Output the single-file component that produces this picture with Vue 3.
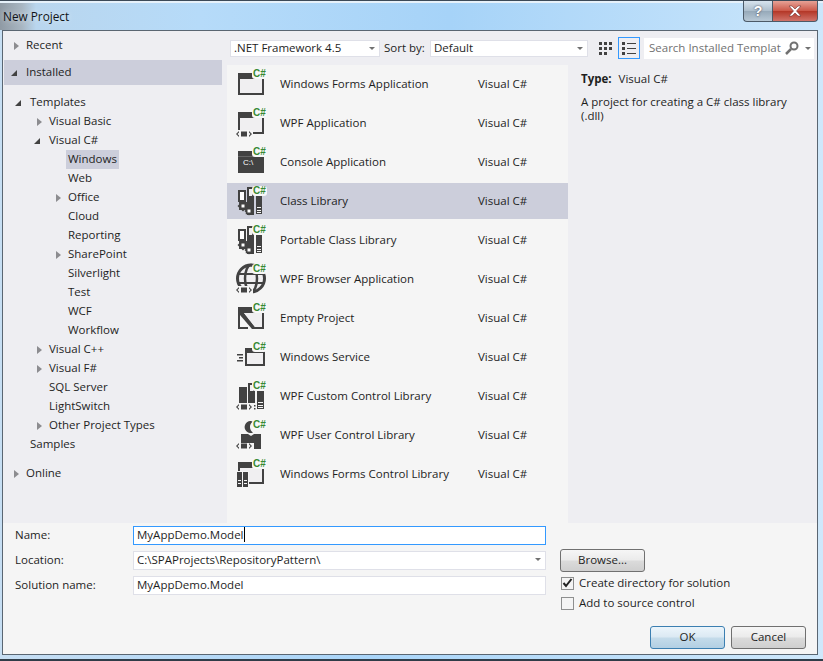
<script setup>
const DARK = '#424242'
const PANE = '#f0eff1'
const CUT = '#f5f5f5'

// the <■> mark that sits under the WPF icons
const wpfMark = { d: 'M4 26v1.500L2.500 29 4 30.500V32l-3-3zM6 26.500h6v5H6zM14 26v1.500l1.500 1.500-1.500 1.500V32l3-3z', fill: DARK }
const markGap = { d: 'M0 25h18v8H0z', fill: CUT }

// a small eight pointed cog with a hole in it
function cog(x, y, r) {
  const s = r * 0.72
  return [
    { d: `M${x - s} ${y - s}h${s * 2}v${s * 2}h${-s * 2}zM${x} ${y - r}l${r} ${r}l${-r} ${r}l${-r} ${-r}z`, fill: DARK },
    { d: `M${x - 1.5} ${y - 1.5}h3v3h-3z`, fill: '#fff' },
  ]
}

const library = [
  { d: 'M12 4h7v28h-7z', fill: DARK },
  { d: 'M14 6h3v7h-3z', fill: PANE },
  { d: 'M21 10h6v21h-6z', fill: DARK },
  { d: 'M22 24h4v1h-4zM22 27h4v1h-4zM22 29h4v1h-4z', fill: CUT },
  { d: 'M3 7h8v12H3z', fill: DARK },
  { d: 'M5 9h4v8H5z', fill: '#fff' },
  ...cog(8, 23, 5.5),
  ...cog(14, 28, 4.5),
]

// every icon is drawn on a 34x36 grid, the row's top left corner being 0,0
const icons = {
  forms: [{ d: 'M3 7h26v22H3z', fill: DARK }, { d: 'M5 13h22v14H5z', fill: PANE }],
  wpf: [
    { d: 'M3 7h26v22H18v-2h9V13H5v12H3z', fill: DARK },
    { d: 'M5 13h22v14H18v-2H5z', fill: PANE },
    wpfMark,
  ],
  console: [
    { d: 'M3 7h26v22H3z', fill: DARK },
    { d: 'M3 12h26v1H3z', fill: '#666' },
  ],
  library,
  browser: [
    { d: 'M2.500 17.500a13.500 13.500 0 1 0 27 0a13.500 13.500 0 1 0-27 0z', fill: PANE, stroke: DARK, sw: 3 },
    { d: 'M16 4a6 13.500 0 0 0 0 27a6 13.500 0 0 0 0-27z', fill: 'none', stroke: DARK, sw: 2.5 },
    { d: 'M3 13h26M3 22h26', fill: 'none', stroke: DARK, sw: 2 },
    markGap,
    wpfMark,
  ],
  empty: [
    { d: 'M3 7h19v6H5v14h8v2H3z', fill: DARK },
    { d: 'M5 13h4l11 14v2h-3L5 15z', fill: DARK },
    { d: 'M27 13h2v16H19v-2h8z', fill: DARK },
    { d: 'M9 13h18v14h-7z', fill: PANE },
  ],
  service: [
    { d: 'M10 9h20v18H10z', fill: DARK },
    { d: 'M12 14h16v11H12z', fill: PANE },
    { d: 'M2 15h6v1.500H2zM4 18h4v1.500H4zM2 21h6v1.500H2z', fill: DARK },
  ],
  custom: [
    { d: 'M4 9h8v16H4zM13 5h7v20h-7zM22 12h7v19h-7z', fill: DARK },
    { d: 'M15 7h3v6h-3z', fill: PANE },
    { d: 'M23 24h5v1h-5zM23 27h5v1h-5zM23 29h5v1h-5z', fill: CUT },
    wpfMark,
    { d: 'M19 27h1.500v1.500H19zM19 30h1.500v1.500H19z', fill: DARK },
  ],
  user: [
    { d: 'M18 4.500a6 6 0 1 0 0 11a6.500 6.500 0 0 1 0-11z', fill: DARK },
    { d: 'M6 17h7l3 2 3-2h7v15h-7v-6H6z', fill: DARK },
    wpfMark,
  ],
  formsLib: [
    { d: 'M3 6h26v22H14v-2h13V12H5v3H3z', fill: DARK },
    { d: 'M5 12h22v14H14V15H5z', fill: PANE },
    { d: 'M2 16h5v15H2zM8 16h5v15H8z', fill: DARK },
    { d: 'M3 24h3v1H3zM3 27h3v1H3zM9 24h3v1H9zM9 27h3v1H9z', fill: CUT },
  ],
}

const templates = [
  { name: 'Windows Forms Application', icon: 'forms' },
  { name: 'WPF Application', icon: 'wpf' },
  { name: 'Console Application', icon: 'console', prompt: true },
  { name: 'Class Library', icon: 'library', selected: true },
  { name: 'Portable Class Library', icon: 'library' },
  { name: 'WPF Browser Application', icon: 'browser' },
  { name: 'Empty Project', icon: 'empty' },
  { name: 'Windows Service', icon: 'service' },
  { name: 'WPF Custom Control Library', icon: 'custom' },
  { name: 'WPF User Control Library', icon: 'user' },
  { name: 'Windows Forms Control Library', icon: 'formsLib' },
]

const tree = [
  { label: 'Templates', depth: 1, arrow: 'open' },
  { label: 'Visual Basic', depth: 2, arrow: 'closed' },
  { label: 'Visual C#', depth: 2, arrow: 'open' },
  { label: 'Windows', depth: 3, selected: true },
  { label: 'Web', depth: 3 },
  { label: 'Office', depth: 3, arrow: 'closed' },
  { label: 'Cloud', depth: 3 },
  { label: 'Reporting', depth: 3 },
  { label: 'SharePoint', depth: 3, arrow: 'closed' },
  { label: 'Silverlight', depth: 3 },
  { label: 'Test', depth: 3 },
  { label: 'WCF', depth: 3 },
  { label: 'Workflow', depth: 3 },
  { label: 'Visual C++', depth: 2, arrow: 'closed' },
  { label: 'Visual F#', depth: 2, arrow: 'closed' },
  { label: 'SQL Server', depth: 2 },
  { label: 'LightSwitch', depth: 2 },
  { label: 'Other Project Types', depth: 2, arrow: 'closed' },
  { label: 'Samples', depth: 1 },
]
</script>

<template>
  <div class="window">
    <header class="titlebar">
      <span class="caption">New Project</span>
      <div class="caption-buttons">
        <button class="cap-btn help">?</button>
        <button class="cap-btn close">
          <svg width="16" height="12" viewBox="0 0 16 12">
            <path d="M2 1h3l3 3 3-3h3l-4.500 5 4.500 5h-3l-3-3-3 3H2l4.500-5z" fill="#fff" stroke="#6b3030" stroke-width=".6" />
          </svg>
        </button>
      </div>
    </header>

    <div class="client">
      <div class="main">
        <nav class="side-tree">
          <div class="tree-row top-row">
            <span class="arrow"><i class="tri closed"></i></span>
            <span class="tree-label">Recent</span>
          </div>
          <div class="tree-row top-row installed">
            <span class="arrow"><i class="tri open"></i></span>
            <span class="tree-label">Installed</span>
          </div>
          <div class="tree-list">
            <div
              v-for="item in tree"
              :key="item.label"
              class="tree-row"
              :style="{ paddingLeft: 13 + (item.depth - 1) * 19 + 'px' }"
            >
              <span class="arrow"><i v-if="item.arrow" class="tri" :class="item.arrow"></i></span>
              <span class="tree-label" :class="{ selected: item.selected }">{{ item.label }}</span>
            </div>
          </div>
          <div class="tree-row top-row online">
            <span class="arrow"><i class="tri closed"></i></span>
            <span class="tree-label">Online</span>
          </div>
        </nav>

        <section class="center">
          <div class="toolbar">
            <div class="combo framework">.NET Framework 4.5<i class="drop"></i></div>
            <span class="sort-label">Sort by:</span>
            <div class="combo sort">Default<i class="drop"></i></div>
            <button class="view-btn">
              <svg width="14" height="14" viewBox="0 0 14 14" fill="#424242">
                <path d="M1 1h3v3H1zM6 1h3v3H6zM11 1h3v3h-3zM1 6h3v3H1zM6 6h3v3H6zM11 6h3v3h-3zM1 11h3v3H1zM6 11h3v3H6z" />
              </svg>
            </button>
            <button class="view-btn active">
              <svg width="14" height="14" viewBox="0 0 14 14" fill="#424242">
                <path d="M0 1h3v3H0zM5 2h9v1H5zM0 6h3v3H0zM5 7h9v1H5zM0 11h3v3H0zM5 12h9v1H5z" />
              </svg>
            </button>
            <div class="search">
              <span class="search-text">Search Installed Templat</span>
              <svg class="search-icon" width="14" height="14" viewBox="0 0 14 14" fill="none" stroke="#717171">
                <circle cx="9" cy="5" r="3.500" stroke-width="2" />
                <path d="M6 8l-5 5" stroke-width="2.500" />
              </svg>
              <i class="drop"></i>
            </div>
          </div>

          <div class="content">
            <div class="list">
              <div
                v-for="t in templates"
                :key="t.name"
                class="list-row"
                :class="{ selected: t.selected }"
              >
                <span class="icon">
                  <svg width="34" height="36" viewBox="0 0 34 36">
                    <path
                      v-for="(p, i) in icons[t.icon]"
                      :key="i"
                      :d="p.d"
                      :fill="p.fill"
                      :stroke="p.stroke"
                      :stroke-width="p.sw"
                    />
                  </svg>
                  <span v-if="t.prompt" class="prompt">C:\</span>
                  <span class="badge">C#</span>
                </span>
                <span class="row-name">{{ t.name }}</span>
                <span class="row-lang">Visual C#</span>
              </div>
            </div>
            <aside class="details">
              <p class="type"><b>Type:</b><span>Visual C#</span></p>
              <p class="desc">A project for creating a C# class library (.dll)</p>
            </aside>
          </div>
        </section>
      </div>

      <div class="bottom">
        <div class="fields">
          <label class="field">
            <span>Name:</span>
            <div class="input focused">MyAppDemo.Model<i class="caret"></i></div>
          </label>
          <label class="field">
            <span>Location:</span>
            <div class="input">C:\SPAProjects\RepositoryPattern\<i class="drop"></i></div>
          </label>
          <label class="field">
            <span>Solution name:</span>
            <div class="input">MyAppDemo.Model</div>
          </label>
        </div>
        <div class="actions">
          <button class="btn browse">Browse...</button>
          <div class="check first">
            <span class="box">
              <svg width="11" height="10" viewBox="0 0 11 10">
                <path d="M1.500 5l2.500 3 5.500-7" fill="none" stroke="#222" stroke-width="2" />
              </svg>
            </span>
            <span class="check-text">Create directory for solution</span>
          </div>
          <div class="check">
            <span class="box"></span>
            <span class="check-text">Add to source control</span>
          </div>
          <div class="dialog-btns">
            <button class="btn default">OK</button>
            <button class="btn">Cancel</button>
          </div>
        </div>
      </div>
    </div>
  </div>
</template>

<style>
html, body {
  margin: 0;
  background: #fff;
}
</style>

<style scoped>
.window {
  width: 823px;
  height: 661px;
  box-sizing: border-box;
  overflow: hidden;
  position: relative;
  background: linear-gradient(90deg, #c6def3 0%, #a9d5f9 45%, #cfe8fb 100%);
  border-top: 1px solid #3c4a58;
  border-bottom: 2px solid #2f3c48;
  font-family: "Open Sans", "Noto Sans", sans-serif;
  font-size: 11.5px;
  color: #1e1e1e;
}
.titlebar {
  height: 29px;
  border-top: 2px solid #e6f1fa;
  box-sizing: border-box;
  display: flex;
  align-items: flex-start;
  justify-content: space-between;
  background: linear-gradient(90deg, #8f9aa4 0, #a8b6c2 22px, #b9d6ee 36px, #b6dbf9 200px, #a6d3f8 450px, #cbe6fb 100%);
}
.caption {
  margin: 5px 0 0 3px;
  font-size: 11.8px;
  color: #101418;
  text-shadow: 0 0 6px rgba(255, 255, 255, .7);
}
.caption-buttons {
  display: flex;
  margin: -3px 5px 0 0;
}
.cap-btn {
  height: 22px;
  padding: 0;
  border: 1px solid #4c5a68;
  border-top: 0;
  display: flex;
  align-items: center;
  justify-content: center;
}
.help {
  width: 29px;
  border-radius: 0 0 0 4px;
  border-right: 0;
  background: linear-gradient(#dbe7f1, #aebfcd 50%, #95a8b8 52%, #b8c9d6);
  font: bold 14px "Liberation Sans", sans-serif;
  color: #fff;
  text-shadow: 0 0 2px #334;
}
.close {
  width: 46px;
  border-radius: 0 0 4px 0;
  background: linear-gradient(#e9a99e, #cc5a4b 50%, #b33525 52%, #d0736a);
}

.client {
  margin-left: 2px;
  width: 816px;
  height: 625px;
  border: 1px solid #5a6672;
  box-sizing: border-box;
  background: #eeeef2;
  display: flex;
  flex-direction: column;
}
.main {
  height: 492px;
  flex-shrink: 0;
  display: flex;
}
.side-tree {
  width: 219px;
  padding-top: 5px;
  flex-shrink: 0;
}
.tree-row {
  height: 19px;
  display: flex;
  align-items: center;
}
.top-row {
  padding-left: 9px;
}
.installed {
  height: 25px;
  margin: 5px 0 8px 1px;
  padding-left: 8px;
  background: #ccceDB;
}
.online {
  margin-top: 10px;
}
.arrow {
  width: 12px;
  flex-shrink: 0;
  display: flex;
  align-items: center;
}
.tri {
  display: block;
}
.tri.closed {
  width: 0;
  height: 0;
  margin-left: 2px;
  border-left: 5px solid #8c8c90;
  border-top: 4.500px solid transparent;
  border-bottom: 4.500px solid transparent;
}
.tri.open {
  width: 0;
  height: 0;
  margin-left: -1px;
  border-right: 6px solid #424242;
  border-top: 6px solid transparent;
}
.tree-label {
  padding: 0 2px 2px;
  line-height: 17px;
  white-space: nowrap;
}
.tree-label.selected {
  background: #ccceDB;
}

.center {
  flex: 1;
  display: flex;
  flex-direction: column;
  min-width: 0;
}
.toolbar {
  height: 34px;
  flex-shrink: 0;
  display: flex;
  align-items: center;
  padding-left: 8px;
  box-sizing: border-box;
}
.combo {
  height: 17px;
  line-height: 14px;
  box-sizing: border-box;
  border: 1px solid #dfe0e8;
  background: #fff;
  padding-left: 3px;
  position: relative;
}
.framework {
  width: 150px;
}
.sort-label {
  width: 46px;
  margin-left: 4px;
  padding-bottom: 2px;
}
.sort {
  width: 158px;
}
.drop {
  position: absolute;
  right: 4px;
  top: 6px;
  width: 0;
  height: 0;
  border-top: 3px solid #717171;
  border-left: 3.500px solid transparent;
  border-right: 3.500px solid transparent;
}
.view-btn {
  width: 22px;
  height: 22px;
  margin-left: 6px;
  padding: 0;
  border: 1px solid transparent;
  background: none;
  display: flex;
  align-items: center;
  justify-content: center;
}
.view-btn.active {
  border-color: #3399ff;
  margin-left: 2px;
}
.search {
  width: 170px;
  height: 21px;
  margin-left: 4px;
  background: #fff;
  display: flex;
  align-items: center;
  position: relative;
  padding-left: 5px;
  box-sizing: border-box;
}
.search-text {
  width: 136px;
  padding-bottom: 1px;
  white-space: nowrap;
  color: #717171;
}
.search .drop {
  top: 9px;
  right: 3px;
}
.content {
  flex: 1;
  display: flex;
  min-height: 0;
}
.list {
  width: 341px;
  margin-left: 5px;
  padding-top: 1px;
  box-sizing: border-box;
  background: #f5f5f5;
  display: flex;
  flex-direction: column;
  gap: 3px;
}
.list-row {
  height: 36px;
  display: flex;
  align-items: center;
  padding-left: 8px;
  flex-shrink: 0;
}
.list-row.selected {
  background: #ccceDB;
}
.icon {
  width: 34px;
  height: 36px;
  position: relative;
  flex-shrink: 0;
}
.icon svg {
  display: block;
}
.badge {
  position: absolute;
  left: 17px;
  top: 3px;
  padding: 0 1px;
  font: bold 10px/10px "Liberation Sans", sans-serif;
  color: #388a34;
  background: #f8f8f8;
  border-radius: 3px;
}
.prompt {
  position: absolute;
  left: 8px;
  top: 14px;
  font: 8px/10px "Liberation Sans", sans-serif;
  color: #fff;
}
.row-name {
  width: 198px;
  margin-left: 11px;
  padding-bottom: 2px;
  white-space: nowrap;
}
.row-lang {
  padding-bottom: 2px;
}
.details {
  flex: 1;
  padding: 7px 10px 0 13px;
}
.details p {
  margin: 0;
  line-height: 14px;
}
.type {
  display: flex;
  gap: 7px;
  margin-bottom: 9px !important;
}
.desc {
  width: 215px;
}

.bottom {
  flex: 1;
  display: flex;
  background: #f5f5f5;
  padding: 3px 11px 5px 12px;
}
.fields {
  width: 531px;
  display: flex;
  flex-direction: column;
  gap: 6px;
}
.field {
  display: flex;
  align-items: center;
  height: 19px;
}
.field > span {
  width: 118px;
  flex-shrink: 0;
  padding-bottom: 2px;
}
.input {
  flex: 1;
  height: 19px;
  line-height: 16px;
  box-sizing: border-box;
  border: 1px solid #dfe0e8;
  background: #fff;
  padding-left: 3px;
  position: relative;
}
.input.focused {
  border-color: #3399ff;
}
.caret {
  display: inline-block;
  width: 1px;
  height: 15px;
  background: #000;
  vertical-align: -3px;
}
.actions {
  flex: 1;
  margin-left: 14px;
  display: flex;
  flex-direction: column;
  padding-top: 23px;
}
.btn {
  width: 75px;
  height: 23px;
  padding: 0 0 2px;
  border: 1px solid #707070;
  border-radius: 3px;
  background: linear-gradient(#f6f6f6, #ebebeb 48%, #dbdbdb 52%, #cfcfcf);
  font: inherit;
  color: inherit;
}
.browse {
  width: 85px;
}
.btn.default {
  border-color: #3c7fb1;
  background: linear-gradient(#ecf5fb, #dbe9f3 48%, #c4dbea 52%, #b2cfe3);
}
.check {
  display: flex;
  align-items: center;
  height: 20px;
  margin-left: 1px;
}
.check.first {
  margin-top: 1px;
}
.check-text {
  padding-bottom: 2px;
}
.box {
  width: 13px;
  height: 13px;
  box-sizing: border-box;
  border: 1px solid #8e8f8f;
  background: #f4f4f4;
  margin-right: 5px;
  display: flex;
  align-items: center;
  justify-content: center;
}
.dialog-btns {
  margin-top: auto;
  display: flex;
  justify-content: flex-end;
  gap: 6px;
}
</style>
